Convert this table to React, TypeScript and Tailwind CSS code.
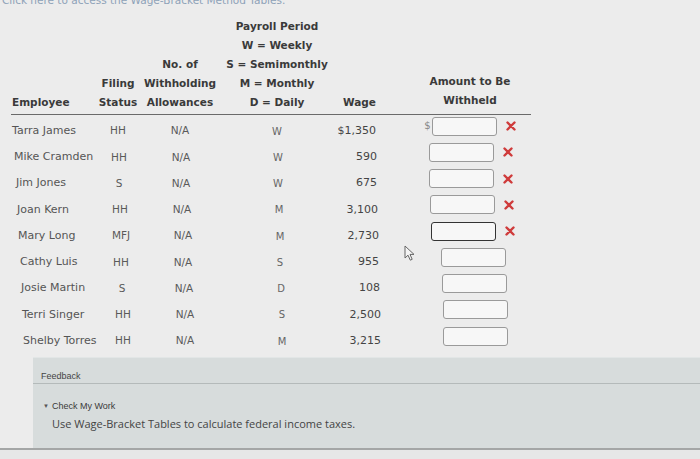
import React from "react";

type Row = {
  name: string;
  status: string;
  period: string;
  wage: string;
  shift: string;
  namePad: string;
  x: boolean;
  dollar?: boolean;
  focused?: boolean;
};

const rows: Row[] = [
  { name: "Tarra James", status: "HH", period: "W", wage: "$1,350", shift: "pl-[0px]", namePad: "pl-[1px]", x: true, dollar: true },
  { name: "Mike Cramden", status: "HH", period: "W", wage: "590", shift: "pl-[1px]", namePad: "pl-[2px]", x: true },
  { name: "Jim Jones", status: "S", period: "W", wage: "675", shift: "pl-[1px]", namePad: "pl-[4px]", x: true },
  { name: "Joan Kern", status: "HH", period: "M", wage: "3,100", shift: "pl-[2px]", namePad: "pl-[4px]", x: true },
  { name: "Mary Long", status: "MFJ", period: "M", wage: "2,730", shift: "pl-[3px]", namePad: "pl-[4px]", x: true, focused: true },
  { name: "Cathy Luis", status: "HH", period: "S", wage: "955", shift: "pl-[3px]", namePad: "pl-[6px]", x: false },
  { name: "Josie Martin", status: "S", period: "D", wage: "108", shift: "pl-[4px]", namePad: "pl-[6px]", x: false },
  { name: "Terri Singer", status: "HH", period: "S", wage: "2,500", shift: "pl-[5px]", namePad: "pl-[6px]", x: false },
  { name: "Shelby Torres", status: "HH", period: "M", wage: "3,215", shift: "pl-[5px]", namePad: "pl-[7px]", x: false },
];

const gridCols = "grid grid-cols-[84px_46px_78px_116px_75px_120px]";

function XMark() {
  return (
    <svg width="10" height="10" viewBox="0 0 10 10" className="ml-[9px]">
      <path d="M1.5 1.5 L8.5 8.5 M8.5 1.5 L1.5 8.5" stroke="#cf3b3b" strokeWidth="2.4" strokeLinecap="round" />
    </svg>
  );
}

export default function App() {
  return (
    <div
      className="relative w-[700px] h-[459px] overflow-hidden bg-[#ececec] text-[#444]"
      style={{ fontFamily: '"DejaVu Sans", Verdana, sans-serif' }}
    >
      {/* top link, cut off */}
      <div className="-mt-[7px] h-[14px] leading-[14px] pl-[2px] text-[10.5px] text-[#8ea2b8] whitespace-nowrap">
        Click here to access the Wage-Bracket Method Tables.
      </div>

      {/* table */}
      <div className="ml-[11px] mt-[10px] w-[520px]">
        {/* header */}
        <div className={`${gridCols} items-end font-bold text-[10.5px] leading-[19px] text-[#3a3a3a] pb-[2px] border-b-[1.5px] border-[#6a6a6a]`}>
          <div className="pl-[1px]">Employee</div>
          <div className="text-center">
            <div>Filing</div>
            <div>Status</div>
          </div>
          <div className="text-center whitespace-nowrap">
            <div>No. of</div>
            <div>Withholding</div>
            <div>Allowances</div>
          </div>
          <div className="text-center whitespace-nowrap">
            <div>Payroll Period</div>
            <div>W = Weekly</div>
            <div>S = Semimonthly</div>
            <div>M = Monthly</div>
            <div>D = Daily</div>
          </div>
          <div className="text-right pr-[34px]">Wage</div>
          <div className="text-center -translate-y-[2px]">
            <div>Amount to Be</div>
            <div>Withheld</div>
          </div>
        </div>

        {/* rows */}
        <div className="pt-[3px]">
          {rows.map((r) => (
            <div key={r.name} className={`${r.shift}`}>
              <div className={`${gridCols} items-center h-[26.25px] text-[11px] text-[#555]`}>
                <div className={`${r.namePad} whitespace-nowrap`}>{r.name}</div>
                <div className="text-center text-[10.5px] text-[#5a5a5a]">{r.status}</div>
                <div className="text-center text-[10.5px] text-[#5a5a5a]">N/A</div>
                <div className="text-center text-[10px] text-[#666]">{r.period}</div>
                <div className="text-right pr-[34px] text-[#444]">{r.wage}</div>
                <div className="flex items-center justify-center -translate-y-[5px]">
                  {r.dollar && <span className="text-[10px] text-[#888] mr-[1px] -translate-y-[1px]">$</span>}
                  <div
                    className={`w-[65px] h-[19px] rounded-[3px] bg-[#f7f7f7] border-[1.5px] ${
                      r.focused ? "border-[#333]" : "border-[#9a9a9a]"
                    }`}
                  />
                  {r.x && <XMark />}
                </div>
              </div>
            </div>
          ))}
        </div>
      </div>

      {/* feedback panel */}
      <div className="mt-[3px] ml-[33px] h-[91px] bg-[#d7dcdc] border-t border-[#e2e6e6]">
        <div
          className="pl-[8px] pt-[12px] h-[26px] text-[9px] leading-[12px] text-[#444] border-b border-[#b4baba]"
          style={{ fontFamily: '"Liberation Sans", Arial, sans-serif' }}
        >
          Feedback
        </div>
        <div
          className="pl-[10px] pt-[16px] text-[9px] leading-[12px] text-[#3a3a3a] flex items-center"
          style={{ fontFamily: '"Liberation Sans", Arial, sans-serif' }}
        >
          <span className="text-[6px] mr-[3px] text-[#555]">▼</span>
          Check My Work
        </div>
        <div
          className="pl-[19px] pt-[5px] text-[11px] leading-[14px] text-[#444]"
          style={{ fontFamily: '"Open Sans", sans-serif' }}
        >
          Use Wage-Bracket Tables to calculate federal income taxes.
        </div>
      </div>
      <div className="h-[2px] bg-[#a4a6a6]" />
      <div className="h-[20px] bg-[#e6e7e7]" />

      {/* mouse cursor */}
      <svg className="absolute left-[404px] top-[245px]" width="12" height="17" viewBox="0 0 12 17">
        <path
          d="M1 1 L1 13 L4 10.2 L6.3 15.2 L8.2 14.3 L6 9.4 L10 9.4 Z"
          fill="#f4f4f4"
          stroke="#666"
          strokeWidth="1"
          strokeLinejoin="round"
        />
      </svg>
    </div>
  );
}
